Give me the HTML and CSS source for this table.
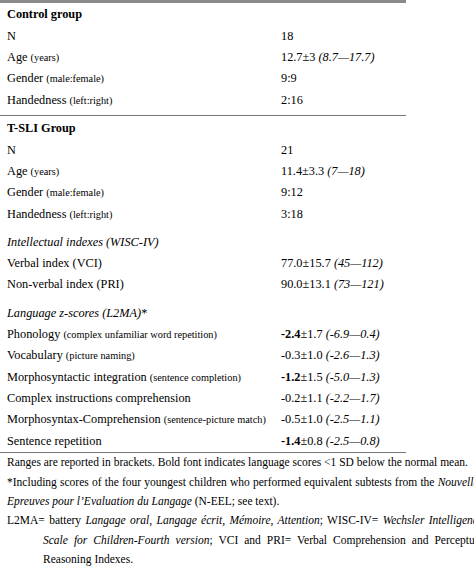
FILE: index.html
```html
<!DOCTYPE html>
<html>
<head>
<meta charset="utf-8">
<link rel="stylesheet" href="styles.css">
</head>
<body>
<div class="page">
  <div class="table">
    <div class="group first">
      <div class="row head"><span class="label"><b>Control group</b></span></div>
      <div class="row"><span class="label">N</span><span class="val">18</span></div>
      <div class="row"><span class="label">Age <small>(years)</small></span><span class="val">12.7±3 <i>(8.7—17.7)</i></span></div>
      <div class="row"><span class="label">Gender <small>(male:female)</small></span><span class="val">9:9</span></div>
      <div class="row"><span class="label">Handedness <small>(left:right)</small></span><span class="val">2:16</span></div>
    </div>
    <div class="group second">
      <div class="row head"><span class="label"><b>T-SLI Group</b></span></div>
      <div class="row"><span class="label">N</span><span class="val">21</span></div>
      <div class="row"><span class="label">Age <small>(years)</small></span><span class="val">11.4±3.3 <i>(7—18)</i></span></div>
      <div class="row"><span class="label">Gender <small>(male:female)</small></span><span class="val">9:12</span></div>
      <div class="row"><span class="label">Handedness <small>(left:right)</small></span><span class="val">3:18</span></div>

      <div class="row sub"><span class="label"><i>Intellectual indexes (WISC-IV)</i></span></div>
      <div class="row"><span class="label">Verbal index (VCI)</span><span class="val">77.0±15.7 <i>(45—112)</i></span></div>
      <div class="row"><span class="label">Non-verbal index (PRI)</span><span class="val">90.0±13.1 <i>(73—121)</i></span></div>

      <div class="row sub"><span class="label"><i>Language z-scores (L2MA)</i>*</span></div>
      <div class="row"><span class="label">Phonology <small>(complex unfamiliar word repetition)</small></span><span class="val"><b>-2.4</b>±1.7 <i>(-6.9—0.4)</i></span></div>
      <div class="row"><span class="label">Vocabulary <small>(picture naming)</small></span><span class="val">-0.3±1.0 <i>(-2.6—1.3)</i></span></div>
      <div class="row"><span class="label">Morphosyntactic integration <small>(sentence completion)</small></span><span class="val"><b>-1.2</b>±1.5 <i>(-5.0—1.3)</i></span></div>
      <div class="row"><span class="label">Complex instructions comprehension</span><span class="val">-0.2±1.1 <i>(-2.2—1.7)</i></span></div>
      <div class="row"><span class="label">Morphosyntax-Comprehension <small>(sentence-picture match)</small></span><span class="val">-0.5±1.0 <i>(-2.5—1.1)</i></span></div>
      <div class="row"><span class="label">Sentence repetition</span><span class="val"><b>-1.4</b>±0.8 <i>(-2.5—0.8)</i></span></div>
    </div>
  </div>
  <div class="notes">
    <p>Ranges are reported in brackets. Bold font indicates language scores &lt;1 SD below the normal mean.</p>
    <p>*Including scores of the four youngest children who performed equivalent subtests from the <i>Nouvelles Epreuves pour l’Evaluation du Langage</i> (N-EEL; see text).</p>
    <p class="hang">L2MA= battery <i>Langage oral, Langage écrit, Mémoire, Attention</i>; WISC-IV= <i>Wechsler Intelligence Scale for Children-Fourth version</i>; VCI and PRI= Verbal Comprehension and Perceptual Reasoning Indexes.</p>
  </div>
</div>
</body>
</html>
```

FILE: styles.css
```css
html, body {
  margin: 0;
  padding: 0;
  background: #fff;
  overflow: hidden;
}
body {
  font-family: "Liberation Serif", "Times New Roman", serif;
  font-size: 12.3px;
  color: #000;
}
.page {
  width: 474px;
  height: 566px;
  overflow: hidden;
}
.table {
  width: 406px;
  border-top: 3px solid #8a8a8a;
  border-bottom: 1px solid #777;
}
.group.first {
  padding-top: 1.4px;
  padding-bottom: 4.5px;
  border-bottom: 1px solid #777;
}
.group.second {
  padding-top: 2px;
  padding-bottom: 0.5px;
}
.row {
  display: flex;
  height: 21.3px;
  line-height: 21.3px;
  white-space: nowrap;
}
.row.sub {
  margin-top: 7px;
}
.label {
  width: 274px;
  padding-left: 7px;
  flex: none;
}
.val {
  flex: none;
}
small {
  font-size: 10.3px;
}
b {
  font-weight: bold;
}
.notes {
  width: 483px;
  padding-left: 7px;
  box-sizing: border-box;
  font-size: 11.5px;
  line-height: 19.3px;
}
.notes p {
  margin: 0;
  text-align: justify;
}
.notes .hang {
  padding-left: 36px;
  text-indent: -36px;
}
```
